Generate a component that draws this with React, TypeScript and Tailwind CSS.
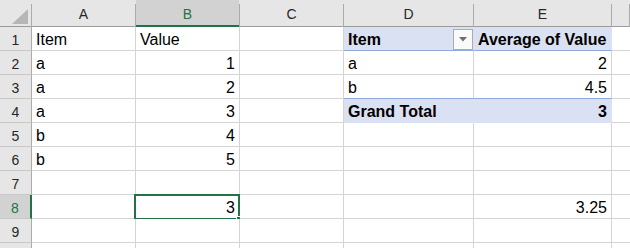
import type { ReactNode } from 'react';

type Cell = {
  text?: string;
  align?: 'left' | 'right';
  bold?: boolean;
  pivot?: 'head' | 'total' | 'aboveTotal';
  dropdown?: boolean;
  selected?: boolean;
};

const columns = [
  { letter: 'A', width: 'w-[104px]' },
  { letter: 'B', width: 'w-[104px]' },
  { letter: 'C', width: 'w-[104px]' },
  { letter: 'D', width: 'w-[130px]' },
  { letter: 'E', width: 'w-[138px]' },
];

const L = (text: string): Cell => ({ text, align: 'left' });
const R = (text: string): Cell => ({ text, align: 'right' });

const rows: Cell[][] = [
  [L('Item'), L('Value'), {}, { text: 'Item', bold: true, pivot: 'head', dropdown: true }, { text: 'Average of Value', bold: true, pivot: 'head' }],
  [L('a'), R('1'), {}, L('a'), R('2')],
  [L('a'), R('2'), {}, { text: 'b', pivot: 'aboveTotal' }, { text: '4.5', align: 'right', pivot: 'aboveTotal' }],
  [L('a'), R('3'), {}, { text: 'Grand Total', bold: true, pivot: 'total' }, { text: '3', align: 'right', bold: true, pivot: 'total' }],
  [L('b'), R('4'), {}, {}, {}],
  [L('b'), R('5'), {}, {}, {}],
  [{}, {}, {}, {}, {}],
  [{}, { text: '3', align: 'right', selected: true }, {}, {}, R('3.25')],
  [{}, {}, {}, {}, {}],
  [{}, {}, {}, {}, {}],
];

function HeaderCell({ width, active, children }: { width: string; active?: boolean; children: ReactNode }) {
  return (
    <div className={`${width} flex shrink-0`}>
      <div
        className={`flex-1 flex justify-center pt-[5px] text-[14px] leading-[18px] ${
          active ? 'bg-[#d2d2d2] text-[#217346] border-b-2 border-[#217346]' : 'text-[#262626] border-b border-[#9b9b9b]'
        }`}
      >
        {children}
      </div>
      <div className="w-px flex flex-col">
        <div className="h-[4px]" />
        <div className="flex-1 bg-[#ababab]" />
      </div>
    </div>
  );
}

function DataCell({ cell, width }: { cell: Cell; width: string }) {
  let tone = 'bg-white border-r border-b border-[#d4d4d4]';
  if (cell.pivot === 'head') tone = 'bg-[#d9e1f2] border-r border-r-[#d9e1f2] border-b border-b-[#8ea9db]';
  if (cell.pivot === 'aboveTotal') tone = 'bg-white border-r border-r-[#d4d4d4] border-b border-b-[#8ea9db]';
  if (cell.pivot === 'total') tone = 'bg-[#d9e1f2] border-r border-b border-[#d9e1f2]';

  return (
    <div
      className={`${width} h-[24px] shrink-0 relative flex items-start px-[4px] pt-[3px] text-[16px] leading-[20px] text-black whitespace-nowrap ${tone} ${
        cell.align === 'right' ? 'justify-end' : 'justify-start'
      } ${cell.bold ? 'font-bold' : ''}`}
    >
      {cell.text}
      {cell.dropdown && (
        <div className="absolute right-0 top-[2px] w-[20px] h-[21px] bg-[#fafafa] border border-[#acacac] flex items-center justify-center">
          <svg width="8" height="5" viewBox="0 0 8 5">
            <path d="M0 0h8L4 4.5z" fill="#6f6f6f" />
          </svg>
        </div>
      )}
      {cell.selected && (
        <div className="absolute -left-[2px] -top-[1px] -right-[1px] -bottom-[2px] border-2 border-[#217346]">
          <div className="absolute -right-[5px] -bottom-[5px] w-[7px] h-[7px] bg-[#217346] border border-white" />
        </div>
      )}
    </div>
  );
}

export default function App() {
  return (
    <div className="w-[630px] h-[248px] overflow-hidden bg-white font-['Liberation_Sans',Arial,sans-serif]">
      {/* column letters */}
      <div className="flex h-[27px] bg-[#e6e6e6]">
        <div className="w-[32px] shrink-0 flex">
          <div className="flex-1 border-b border-[#9b9b9b] flex items-end justify-end pb-[2px] pr-[3px]">
            <svg width="16" height="15" viewBox="0 0 16 15">
              <path d="M0 15H16V0z" fill="#b6b6b6" />
            </svg>
          </div>
          <div className="w-px flex flex-col">
            <div className="h-[4px]" />
            <div className="flex-1 bg-[#ababab]" />
          </div>
        </div>
        {columns.map((c) => (
          <HeaderCell key={c.letter} width={c.width} active={c.letter === 'B'}>
            {c.letter}
          </HeaderCell>
        ))}
        <HeaderCell width="flex-1">{''}</HeaderCell>
      </div>

      {rows.map((row, i) => {
        const current = i === 7;
        // the last row only peeks in at the bottom edge, so its number stays hidden
        const label = i < rows.length - 1 ? i + 1 : '';
        return (
          <div key={i} className="flex">
            <div
              className={`w-[32px] h-[24px] shrink-0 flex justify-center pt-[3px] text-[14px] leading-[20px] border-b border-[#c8c8c8] ${
                current
                  ? 'bg-[#d2d2d2] text-[#217346] border-r-2 border-r-[#217346]'
                  : 'bg-[#e6e6e6] text-[#262626] border-r border-r-[#ababab]'
              }`}
            >
              {label}
            </div>
            {row.map((cell, j) => (
              <DataCell key={j} cell={cell} width={columns[j].width} />
            ))}
            <div className="flex-1 h-[24px] border-b border-[#d4d4d4]" />
          </div>
        );
      })}
    </div>
  );
}
